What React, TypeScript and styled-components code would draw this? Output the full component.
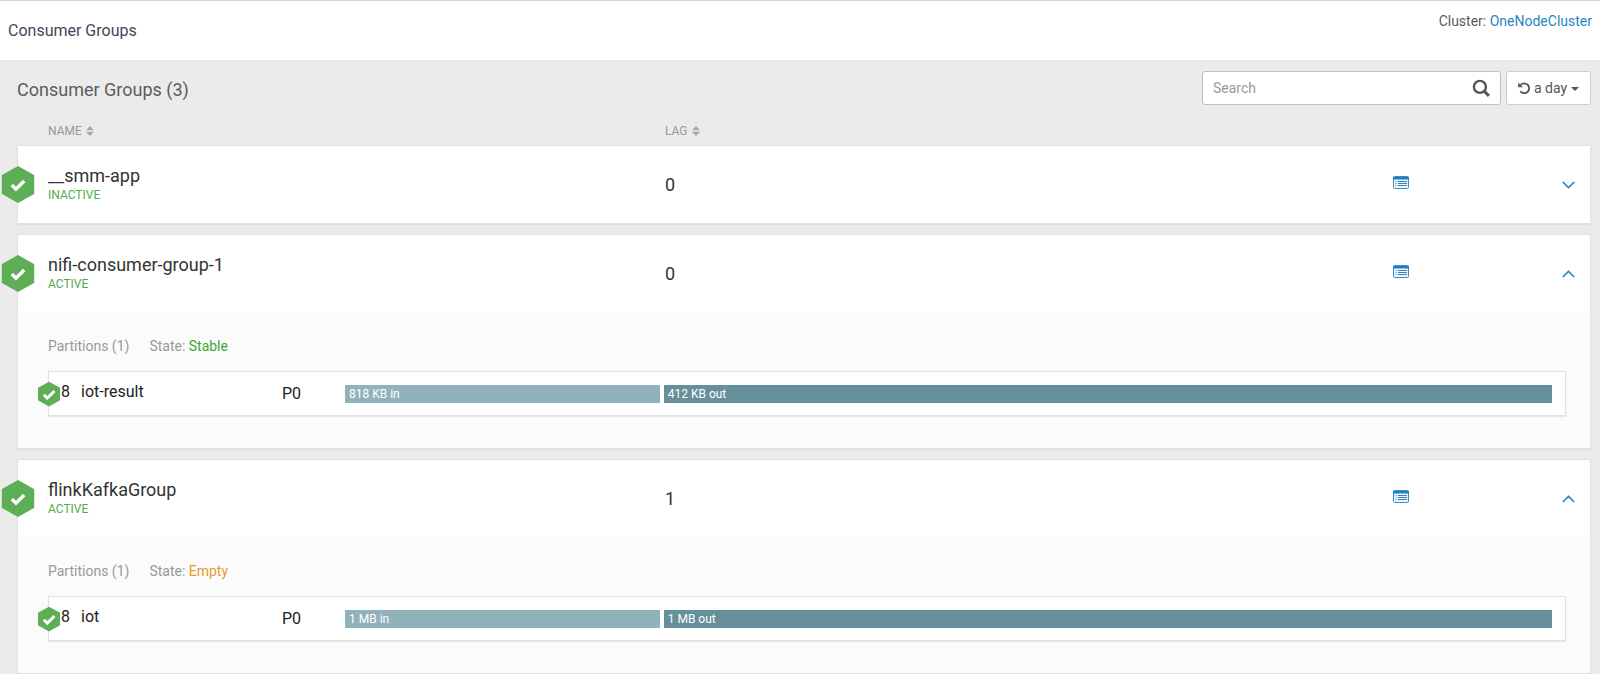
import React, { useState } from "react";
import styled, { createGlobalStyle } from "styled-components";

const GlobalStyle = createGlobalStyle`
  *, *::before, *::after { box-sizing: border-box; }
  body {
    margin: 0;
    background: #ebebeb;
    color: #333;
    font-family: Roboto, "Liberation Sans", sans-serif;
    font-size: 14px;
    line-height: 20px;
  }
  h1, h2, h3, p, ul { margin: 0; padding: 0; font-weight: 400; }
  ul { list-style: none; }
  button, input { font: inherit; color: inherit; }
`;

const Header = styled.header`
  display: flex;
  justify-content: space-between;
  align-items: flex-start;
  height: 60px;
  padding: 10px 8px 0;
  background: #fff;
  border-top: 1px solid #d4d4d4;
`;

const PageTitle = styled.h1`
  padding-top: 8px;
  font-size: 16px;
  line-height: 24px;
  color: #3f4759;
`;

const Cluster = styled.p`
  color: #5a5a5a;
`;

const ClusterLink = styled.a`
  color: #2587bd;
  text-decoration: none;
`;

const Main = styled.main`
  padding: 11px 9px 0 17px;
`;

const Toolbar = styled.div`
  display: flex;
  align-items: center;
  gap: 5px;
`;

const SectionTitle = styled.h2`
  flex: 1;
  padding-top: 4px;
  font-size: 18px;
  line-height: 24px;
  color: #5c5c5c;
`;

const SearchBox = styled.label`
  display: flex;
  align-items: center;
  width: 299px;
  height: 34px;
  padding: 0 10px;
  background: #fff;
  border: 1px solid #b9c0c9;
  border-radius: 3px;
`;

const SearchInput = styled.input`
  flex: 1;
  min-width: 0;
  padding: 0;
  border: 0;
  outline: 0;
  background: none;
  &::placeholder { color: #999; opacity: 1; }
`;

const RangeButton = styled.button`
  display: flex;
  align-items: center;
  justify-content: center;
  gap: 4px;
  width: 85px;
  height: 34px;
  padding: 0;
  background: #fff;
  border: 1px solid #ccc;
  border-radius: 3px;
  color: #555;
  cursor: pointer;
`;

const groupColumns = `
  display: grid;
  grid-template-columns: 617fr 728fr 169fr 28px;
  padding-left: 30px;
`;

const ColumnHeads = styled.div`
  ${groupColumns}
  padding-top: 16px;
  height: 40px;
  margin: 0 1px;
`;

const SortButton = styled.button`
  display: flex;
  align-items: center;
  justify-self: start;
  gap: 4px;
  height: 20px;
  padding: 0;
  border: 0;
  background: none;
  font-size: 12px;
  color: #999;
  cursor: pointer;
`;

const GroupList = styled.ul`
  display: flex;
  flex-direction: column;
  gap: 10px;
`;

const Card = styled.li`
  background: #fff;
  border: 1px solid #e0e0e0;
  box-shadow: 0 1px 1px #dedede;
`;

const CardHead = styled.div`
  ${groupColumns}
  position: relative;
  align-items: center;
  height: 77px;
`;

const GroupName = styled.h3`
  font-size: 18px;
  line-height: 20px;
  color: #333;
`;

const GroupStatus = styled.p`
  font-size: 12px;
  line-height: 18px;
  color: #4fab4f;
`;

const Lag = styled.span`
  font-size: 18px;
  line-height: 24px;
`;

const IconButton = styled.button`
  display: flex;
  justify-self: start;
  padding: 0;
  border: 0;
  background: none;
  color: #1c86c4;
  cursor: pointer;
`;

const ProfileButton = styled(IconButton)`
  padding-bottom: 4px;
`;

const Badge = styled.svg<{ $size: number }>`
  position: absolute;
  left: 0;
  top: 0;
  bottom: 0;
  width: ${(p) => p.$size}px;
  height: ${(p) => p.$size + 4}px;
  margin: auto 0;
  transform: translateX(-50%);
`;

const Detail = styled.div`
  padding: 24px 24px 32px 30px;
  background: #fbfbfb;
`;

const DetailMeta = styled.div`
  display: flex;
  gap: 20px;
  margin-bottom: 15px;
  color: #999;
`;

const StateValue = styled.span<{ $tone: string }>`
  color: ${(p) => p.$tone};
`;

const PartitionRow = styled.div`
  position: relative;
  display: grid;
  grid-template-columns: 20px 201px 63px 1fr;
  align-items: center;
  height: 45px;
  padding: 0 13px 0 12px;
  background: #fff;
  border: 1px solid #e0e0e0;
  box-shadow: 0 1px 1px #e8e8e8;
  font-size: 16px;
  color: #222;
`;

const TopicText = styled.span`
  padding-bottom: 3px;
`;

const Bars = styled.div`
  display: flex;
  gap: 4px;
`;

const Bar = styled.div<{ $share: number; $tone: string }>`
  flex: ${(p) => p.$share} 1 0;
  padding-left: 4px;
  background: ${(p) => p.$tone};
  font-size: 12px;
  line-height: 18px;
  color: #fff;
`;

function HexBadge({ size }: { size: number }) {
  const small = size < 30;
  return (
    <Badge $size={size} viewBox="0 0 32 36" role="img" aria-label="Healthy">
      <path d="M16 0 32 9v18L16 36 0 27V9z" fill="#5ead57" />
      <path
        d={small ? "M8.5 19 13.5 24 24 13.5" : "M10 18.5 14 22.5 22 14.5"}
        fill="none"
        stroke="#fff"
        strokeWidth={small ? 4.2 : 3.4}
      />
    </Badge>
  );
}

function SortIcon() {
  return (
    <svg width="8" height="10" viewBox="0 0 8 10" fill="#a8a8a8" aria-hidden="true">
      <path d="M4 0 8 4.2H0zM4 10 0 5.8h8z" />
    </svg>
  );
}

function SearchIcon() {
  return (
    <svg width="18" height="18" viewBox="0 0 18 18" fill="none" stroke="#555" aria-hidden="true">
      <circle cx="7.9" cy="7.9" r="6" strokeWidth="2.4" />
      <path d="m12.3 12.3 4.6 4.6" strokeWidth="3" />
    </svg>
  );
}

function RewindIcon() {
  return (
    <svg width="12" height="12" viewBox="0 0 12 12" fill="none" aria-hidden="true">
      <path d="M2.4 3.3A4.9 4.9 0 1 1 2.3 9.2" stroke="#555" strokeWidth="1.8" />
      <path d="M.2.6v4.6h4.7z" fill="#555" />
    </svg>
  );
}

function CaretIcon() {
  return (
    <svg width="8" height="6" viewBox="0 0 8 6" fill="#555" aria-hidden="true">
      <path d="M0 2h8L4 6z" />
    </svg>
  );
}

function ListIcon() {
  return (
    <svg width="16" height="13" viewBox="0 0 16 13" aria-hidden="true">
      <rect x=".5" y=".5" width="15" height="12" rx="1" fill="#eef6fb" stroke="#3a8fc7" />
      <path d="M0 1h16v2.5H0z" fill="#1c7fbe" />
      <path d="M5 5.5h9M5 7.5h9M5 9.5h9" stroke="#2c86c0" />
      <path d="M2 5.5h2M2 7.5h2M2 9.5h2" stroke="#8fc1e2" />
    </svg>
  );
}

function Chevron({ up }: { up: boolean }) {
  return (
    <svg width="13" height="8" viewBox="0 0 13 8" fill="none" aria-hidden="true">
      <path d={up ? "M.8 7 6.5 1.4 12.2 7" : "M.8 1 6.5 6.6 12.2 1"} stroke="#1c86c4" strokeWidth="1.6" />
    </svg>
  );
}

interface Group {
  name: string;
  status: string;
  lag: number;
  open: boolean;
  state: string;
  tone: string;
  topic: string;
  input: string;
  output: string;
}

const groups: Group[] = [
  { name: "__smm-app", status: "INACTIVE", lag: 0, open: false, state: "Empty", tone: "#e59c2c", topic: "", input: "", output: "" },
  { name: "nifi-consumer-group-1", status: "ACTIVE", lag: 0, open: true, state: "Stable", tone: "#3fa535", topic: "iot-result", input: "818 KB in", output: "412 KB out" },
  { name: "flinkKafkaGroup", status: "ACTIVE", lag: 1, open: true, state: "Empty", tone: "#e59c2c", topic: "iot", input: "1 MB in", output: "1 MB out" },
];

function GroupCard({ group }: { group: Group }) {
  const [open, setOpen] = useState(group.open);
  return (
    <Card>
      <CardHead>
        <HexBadge size={33} />
        <div>
          <GroupName>{group.name}</GroupName>
          <GroupStatus>{group.status}</GroupStatus>
        </div>
        <Lag>{group.lag}</Lag>
        <ProfileButton aria-label={`Profile of ${group.name}`}>
          <ListIcon />
        </ProfileButton>
        <IconButton aria-label="Toggle details" aria-expanded={open} onClick={() => setOpen(!open)}>
          <Chevron up={open} />
        </IconButton>
      </CardHead>
      {open && group.topic && (
        <Detail>
          <DetailMeta>
            <span>Partitions (1)</span>
            <span>
              State: <StateValue $tone={group.tone}>{group.state}</StateValue>
            </span>
          </DetailMeta>
          <PartitionRow>
            <HexBadge size={22} />
            <TopicText>8</TopicText>
            <TopicText>{group.topic}</TopicText>
            <span>P0</span>
            <Bars>
              <Bar $share={26} $tone="#91b2ba">{group.input}</Bar>
              <Bar $share={74} $tone="#658f9b">{group.output}</Bar>
            </Bars>
          </PartitionRow>
        </Detail>
      )}
    </Card>
  );
}

export default function App() {
  return (
    <>
      <GlobalStyle />
      <Header>
        <PageTitle>Consumer Groups</PageTitle>
        <Cluster>
          Cluster: <ClusterLink href="#cluster">OneNodeCluster</ClusterLink>
        </Cluster>
      </Header>
      <Main>
        <Toolbar>
          <SectionTitle>Consumer Groups (3)</SectionTitle>
          <SearchBox>
            <SearchInput type="text" placeholder="Search" aria-label="Search" />
            <SearchIcon />
          </SearchBox>
          <RangeButton>
            <RewindIcon />
            a day
            <CaretIcon />
          </RangeButton>
        </Toolbar>
        <ColumnHeads>
          <SortButton>
            NAME <SortIcon />
          </SortButton>
          <SortButton>
            LAG <SortIcon />
          </SortButton>
        </ColumnHeads>
        <GroupList>
          {groups.map((group) => (
            <GroupCard key={group.name} group={group} />
          ))}
        </GroupList>
      </Main>
    </>
  );
}
